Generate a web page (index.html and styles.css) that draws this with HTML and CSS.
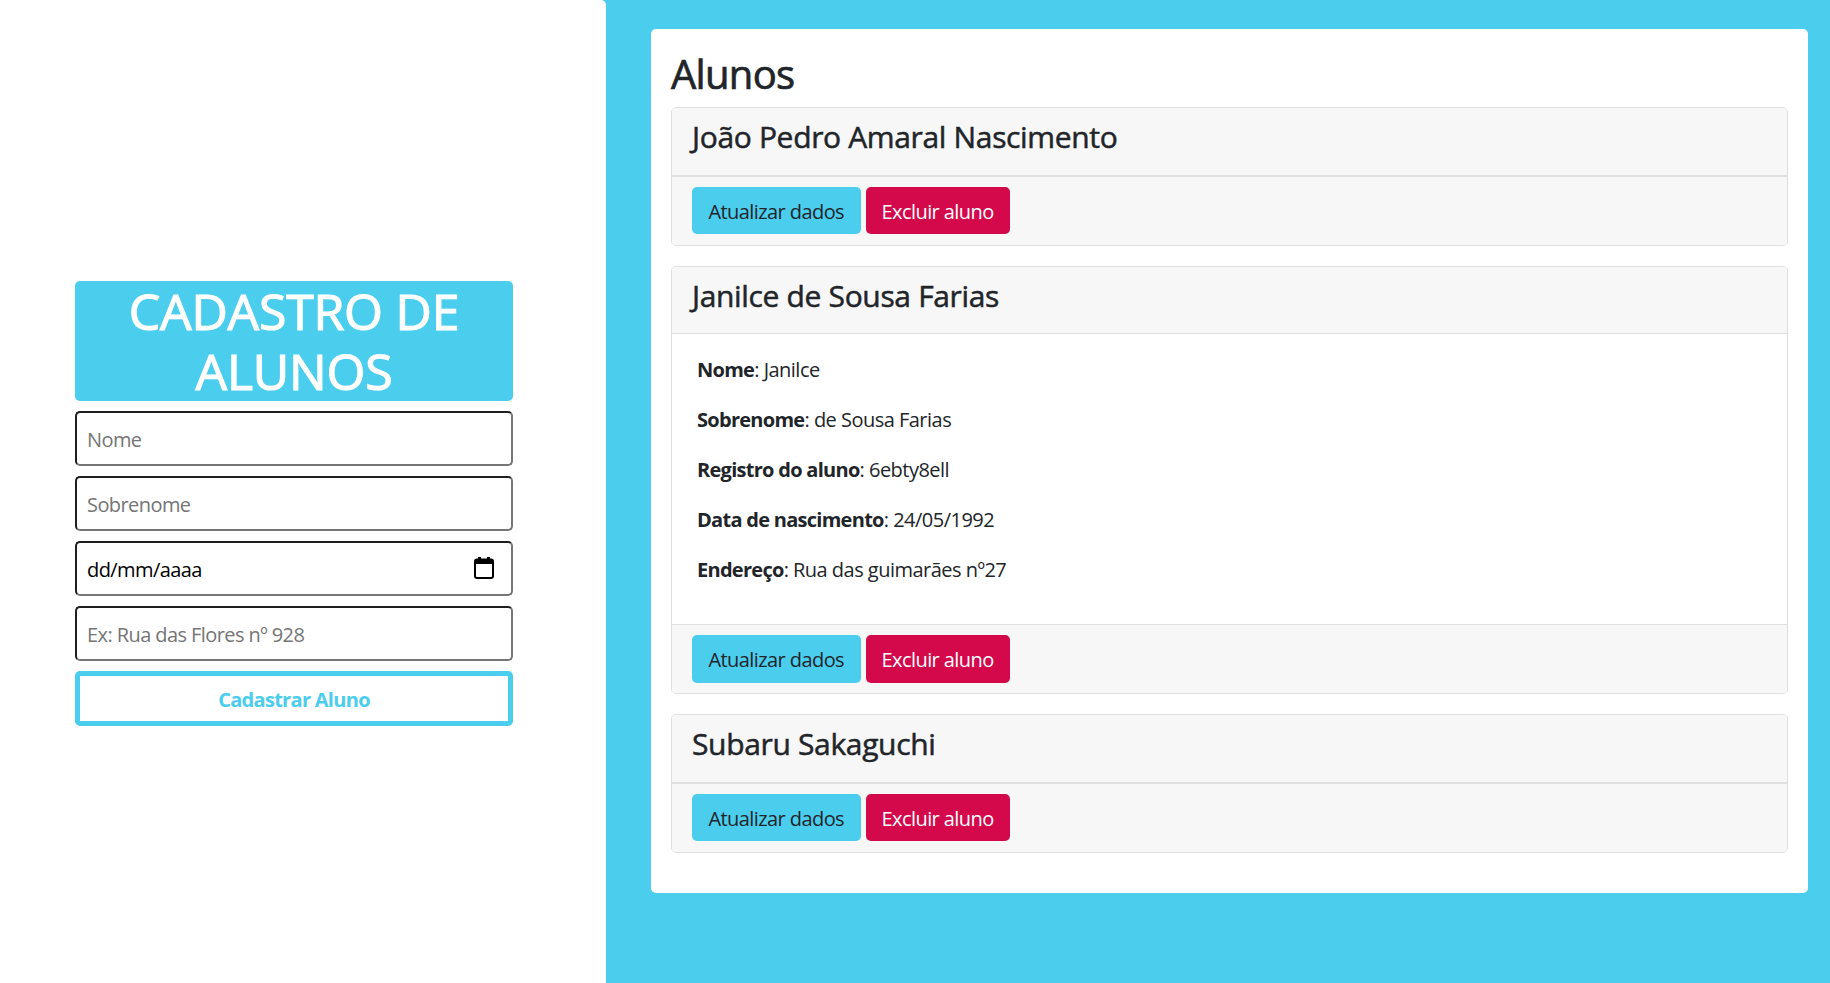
FILE: index.html
```html
<!DOCTYPE html>
<html lang="pt-BR">
<head>
    <meta charset="UTF-8">
    <meta name="viewport" content="width=device-width, initial-scale=1.0">
    <title>Cadastro de Alunos</title>
    <link rel="stylesheet" href="styles.css">
</head>
<body>
    <aside class="painel-form">
        <form class="form-aluno">
            <h1 class="form-titulo">CADASTRO DE ALUNOS</h1>
            <input class="campo" type="text" placeholder="Nome">
            <input class="campo" type="text" placeholder="Sobrenome">
            <div class="campo campo-data">
                <span>dd/mm/aaaa</span>
                <svg class="icone-data" viewBox="0 0 20 22" aria-hidden="true">
                    <path d="M4 0h3v3H4zM13 0h3v3h-3z" fill="#000"/>
                    <rect x="1" y="2.5" width="18" height="18.5" rx="2" fill="none" stroke="#000" stroke-width="2"/>
                    <rect x="1" y="2.5" width="18" height="4.5" fill="#000"/>
                </svg>
            </div>
            <input class="campo" type="text" placeholder="Ex: Rua das Flores nº 928">
            <button class="btn-cadastrar" type="button">Cadastrar Aluno</button>
        </form>
    </aside>

    <main class="painel-lista">
        <section class="lista">
            <h2 class="lista-titulo">Alunos</h2>

            <article class="card">
                <header class="card-header"><h4>João Pedro Amaral Nascimento</h4></header>
                <footer class="card-footer">
                    <button class="btn btn-atualizar" type="button">Atualizar dados</button>
                    <button class="btn btn-excluir" type="button">Excluir aluno</button>
                </footer>
            </article>

            <article class="card">
                <header class="card-header"><h4>Janilce de Sousa Farias</h4></header>
                <div class="card-body">
                    <p><strong>Nome</strong>: Janilce</p>
                    <p><strong>Sobrenome</strong>: de Sousa Farias</p>
                    <p><strong>Registro do aluno</strong>: 6ebty8ell</p>
                    <p><strong>Data de nascimento</strong>: 24/05/1992</p>
                    <p><strong>Endereço</strong>: Rua das guimarães nº27</p>
                </div>
                <footer class="card-footer">
                    <button class="btn btn-atualizar" type="button">Atualizar dados</button>
                    <button class="btn btn-excluir" type="button">Excluir aluno</button>
                </footer>
            </article>

            <article class="card">
                <header class="card-header"><h4>Subaru Sakaguchi</h4></header>
                <footer class="card-footer">
                    <button class="btn btn-atualizar" type="button">Atualizar dados</button>
                    <button class="btn btn-excluir" type="button">Excluir aluno</button>
                </footer>
            </article>
        </section>
    </main>
</body>
</html>
```

FILE: styles.css
```css
* {
    box-sizing: border-box;
}

body {
    margin: 0;
    min-height: 100vh;
    display: flex;
    background-color: #4bcdee;
    color: #212529;
    font-family: "Open Sans", "Noto Sans", sans-serif;
    font-size: 20px;
    line-height: 30px;
    letter-spacing: -0.58px;
}

.painel-form {
    width: 606px;
    flex-shrink: 0;
    display: flex;
    flex-direction: column;
    justify-content: center;
    padding: 23px 93px 0 75px;
    background-color: white;
    border-top-right-radius: 5px;
}

.form-aluno {
    display: flex;
    flex-direction: column;
    gap: 10px;
}

.form-titulo {
    margin: 0;
    padding: 0 10px;
    background-color: #4bcdee;
    border-radius: 5px;
    color: white;
    font-size: 50px;
    font-weight: 400;
    line-height: 60px;
    text-align: center;
    letter-spacing: -0.2px;
    -webkit-text-stroke: 1.2px white;
}

.campo {
    width: 100%;
    height: 55px;
    padding: 2px 10px 0;
    background-color: white;
    border: 2px solid;
    border-color: #1f1f1f #767676 #767676 #1f1f1f;
    border-radius: 5px;
    color: #000;
    font: inherit;
    letter-spacing: inherit;
}

.campo::placeholder {
    color: #757575;
}

.campo-data {
    display: flex;
    align-items: center;
    justify-content: space-between;
    padding-right: 17px;
}

.campo-data span {
    padding-top: 2px;
}

.icone-data {
    width: 20px;
    height: 22px;
    margin-top: -2px;
}

.btn-cadastrar {
    height: 55px;
    padding-top: 4px;
    background-color: white;
    border: 5px solid #4bcdee;
    border-radius: 5px;
    color: #4bcdee;
    font: inherit;
    font-weight: 700;
    letter-spacing: -0.7px;
}

.painel-lista {
    flex-grow: 1;
    padding: 29px 22px 90px 45px;
}

.lista {
    padding: 20px;
    background-color: white;
    border-radius: 5px;
}

.lista-titulo {
    margin: 1px 0 9px;
    font-size: 40px;
    font-weight: 400;
    line-height: 48px;
    letter-spacing: -0.7px;
    -webkit-text-stroke: 0.7px #212529;
}

.card {
    margin-bottom: 20px;
    background-color: white;
    border: 1px solid #dfdfdf;
    border-radius: 5px;
    overflow: hidden;
}

.card-header {
    height: 67.5px;
    padding: 11px 20px 0;
    background-color: #f7f7f7;
    border-bottom: 1px solid #dfdfdf;
}

.card-header h4 {
    margin: 0;
    font-size: 30px;
    font-weight: 400;
    line-height: 36px;
    letter-spacing: -0.34px;
    -webkit-text-stroke: 0.5px #212529;
}

.card-body {
    padding: 21px 25px 19px;
}

.card-body p {
    margin: 0 0 20px;
    letter-spacing: -0.52px;
}

.card-body strong {
    letter-spacing: -0.72px;
}

.card-footer {
    display: flex;
    gap: 5px;
    padding: 10px 20px 10.5px;
    background-color: #f7f7f7;
    border-top: 1px solid #dfdfdf;
}

.btn {
    height: 47.5px;
    padding: 3px 16.5px 0;
    border: 0;
    border-radius: 5px;
    font: inherit;
    letter-spacing: inherit;
}

.btn-atualizar {
    background-color: #4bcdee;
    color: #212529;
}

.btn-excluir {
    padding: 3px 16px 0;
    background-color: #d3094b;
    color: white;
}
```
